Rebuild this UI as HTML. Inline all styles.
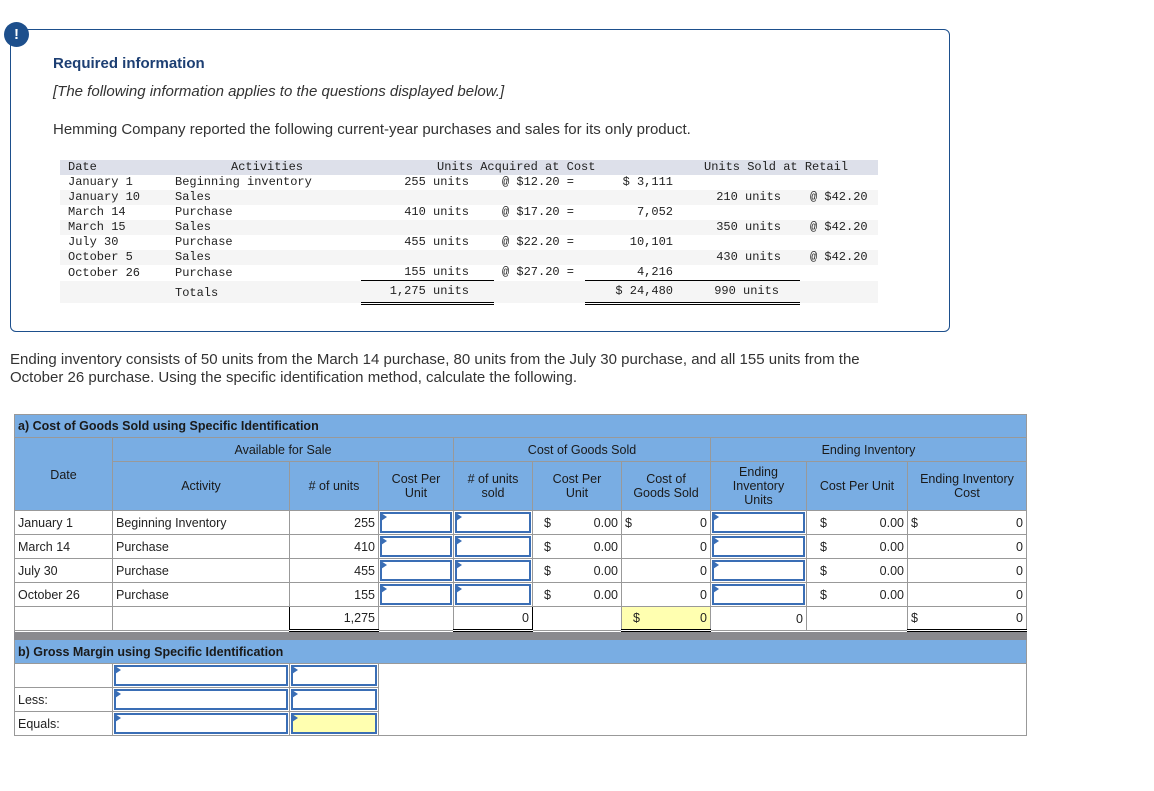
<!DOCTYPE html>
<html><head><meta charset="utf-8"><style>
*{margin:0;padding:0;box-sizing:border-box}
body{width:1154px;height:791px;background:#fff;font-family:"Liberation Sans",Arial,sans-serif;color:#222;position:relative;overflow:hidden}
.box{position:absolute;left:10px;top:29px;width:940px;height:303px;border:1px solid #1d4f8c;border-radius:6px}
.ic{position:absolute;left:4px;top:22px;width:25px;height:25px;border-radius:50%;background:#1d4f8c;color:#fff;font-weight:bold;font-size:15px;text-align:center;line-height:25px;z-index:2}
.t{position:absolute;white-space:nowrap}
.m{position:absolute;font-family:"Liberation Mono",monospace;font-size:12px;color:#222;white-space:nowrap;line-height:15px}
.r{text-align:right}
.row{position:absolute;left:60px;width:818px;height:15px}
table{position:absolute;left:14px;top:414px;border-collapse:collapse;table-layout:fixed;font-size:12.5px}
td{border:1px solid #999;height:24px;padding:0 3px;white-space:nowrap;position:relative}
.h{background:#79ade3;color:#1a1a1a;text-align:center;line-height:14px}
.in{position:absolute;left:1px;top:1px;right:1px;bottom:1px;border:2px solid #3a6eb5;background:#fff}
.in:before{content:"";position:absolute;left:-1px;top:-1px;border-left:6px solid #3a6eb5;border-bottom:4px solid transparent;border-top:4px solid transparent}
.y{background:#ffffb0}
.num{text-align:right}
.dl{float:left}
</style></head><body>
<div class="ic">!</div>
<div class="box"></div>
<div class="t" style="left:53px;top:55px;font-size:15px;font-weight:bold;color:#1d3f73">Required information</div>
<div class="t" style="left:53px;top:83px;font-size:15px;font-style:italic;color:#333">[The following information applies to the questions displayed below.]</div>
<div class="t" style="left:53px;top:121px;font-size:15px;color:#333">Hemming Company reported the following current-year purchases and sales for its only product.</div>

<div class="row" style="top:160px;background:#dde0ea"></div>
<div class="row" style="top:190px;background:#f5f5f5"></div>
<div class="row" style="top:220px;background:#f5f5f5"></div>
<div class="row" style="top:250px;background:#f5f5f5"></div>
<div class="row" style="top:281px;height:22px;background:#f5f5f5"></div>
<div class="m" style="left:68px;top:160px">Date</div>
<div class="m" style="left:231px;top:160px">Activities</div>
<div class="m" style="left:437px;top:160px">Units Acquired at Cost</div>
<div class="m" style="left:704px;top:160px">Units Sold at Retail</div>
<div class="m" style="left:68px;top:175px">January 1<br>January 10<br>March 14<br>March 15<br>July 30<br>October 5</div>
<div class="m" style="left:68px;top:266px">October 26</div>
<div class="m" style="left:175px;top:175px">Beginning inventory<br>Sales<br>Purchase<br>Sales<br>Purchase<br>Sales</div>
<div class="m" style="left:175px;top:266px">Purchase</div>
<div class="m" style="left:175px;top:286px">Totals</div>
<div class="m r" style="left:380px;width:89px;top:175px">255 units</div>
<div class="m r" style="left:380px;width:89px;top:205px">410 units</div>
<div class="m r" style="left:380px;width:89px;top:235px">455 units</div>
<div class="m r" style="left:380px;width:89px;top:265px">155 units</div>
<div class="m r" style="left:380px;width:89px;top:284px">1,275 units</div>
<div style="position:absolute;left:361px;top:280px;width:133px;border-top:1px solid #000"></div>
<div style="position:absolute;left:361px;top:302px;width:133px;border-top:3px double #000"></div>
<div class="m" style="left:502px;top:175px">@ $12.20  =</div>
<div class="m" style="left:502px;top:205px">@ $17.20  =</div>
<div class="m" style="left:502px;top:235px">@ $22.20  =</div>
<div class="m" style="left:502px;top:265px">@ $27.20  =</div>
<div class="m r" style="left:590px;width:83px;top:175px">$ 3,111</div>
<div class="m r" style="left:590px;width:83px;top:205px">7,052</div>
<div class="m r" style="left:590px;width:83px;top:235px">10,101</div>
<div class="m r" style="left:590px;width:83px;top:265px">4,216</div>
<div class="m r" style="left:590px;width:83px;top:284px">$ 24,480</div>
<div style="position:absolute;left:585px;top:280px;width:215px;border-top:1px solid #000"></div>
<div style="position:absolute;left:585px;top:302px;width:215px;border-top:3px double #000"></div>
<div class="m r" style="left:700px;width:81px;top:190px">210 units</div>
<div class="m r" style="left:700px;width:81px;top:220px">350 units</div>
<div class="m r" style="left:700px;width:81px;top:250px">430 units</div>
<div class="m r" style="left:700px;width:79px;top:284px">990 units</div>
<div class="m" style="left:810px;top:190px">@ $42.20</div>
<div class="m" style="left:810px;top:220px">@ $42.20</div>
<div class="m" style="left:810px;top:250px">@ $42.20</div>

<div class="t" style="left:10px;top:351px;font-size:15px;line-height:18px;color:#333;white-space:normal;width:892px">Ending inventory consists of 50 units from the March 14 purchase, 80 units from the July 30 purchase, and all 155 units from the October 26 purchase. Using the specific identification method, calculate the following.</div>

<table>
<colgroup><col style="width:98px"><col style="width:177px"><col style="width:89px"><col style="width:75px"><col style="width:79px"><col style="width:89px"><col style="width:89px"><col style="width:96px"><col style="width:101px"><col style="width:119px"></colgroup>
<tr><td colspan="10" class="h" style="text-align:left;font-weight:bold;height:23px">a) Cost of Goods Sold using Specific Identification</td></tr>
<tr><td rowspan="2" class="h" style="vertical-align:top;padding-top:30px">Date</td><td colspan="3" class="h" style="height:23px">Available for Sale</td><td colspan="3" class="h" style="border-left:1px solid #000">Cost of Goods Sold</td><td colspan="3" class="h" style="border-left:1px solid #000">Ending Inventory</td></tr>
<tr style="height:49px"><td class="h">Activity</td><td class="h"># of units</td><td class="h">Cost Per<br>Unit</td><td class="h" style="border-left:1px solid #000"># of units<br>sold</td><td class="h">Cost Per<br>Unit</td><td class="h">Cost of<br>Goods Sold</td><td class="h" style="border-left:1px solid #000">Ending<br>Inventory<br>Units</td><td class="h">Cost Per Unit</td><td class="h">Ending Inventory<br>Cost</td></tr>
<tr><td>January 1</td><td>Beginning Inventory</td><td class="num">255</td><td><div class="in"></div></td><td><div class="in"></div></td><td class="num"><span class="dl" style="padding-left:8px">$</span>0.00</td><td class="num"><span class="dl">$</span>0</td><td><div class="in"></div></td><td class="num"><span class="dl" style="padding-left:10px">$</span>0.00</td><td class="num"><span class="dl">$</span>0</td></tr>
<tr><td>March 14</td><td>Purchase</td><td class="num">410</td><td><div class="in"></div></td><td><div class="in"></div></td><td class="num"><span class="dl" style="padding-left:8px">$</span>0.00</td><td class="num">0</td><td><div class="in"></div></td><td class="num"><span class="dl" style="padding-left:10px">$</span>0.00</td><td class="num">0</td></tr>
<tr><td>July 30</td><td>Purchase</td><td class="num">455</td><td><div class="in"></div></td><td><div class="in"></div></td><td class="num"><span class="dl" style="padding-left:8px">$</span>0.00</td><td class="num">0</td><td><div class="in"></div></td><td class="num"><span class="dl" style="padding-left:10px">$</span>0.00</td><td class="num">0</td></tr>
<tr><td>October 26</td><td>Purchase</td><td class="num">155</td><td><div class="in"></div></td><td><div class="in"></div></td><td class="num"><span class="dl" style="padding-left:8px">$</span>0.00</td><td class="num">0</td><td><div class="in"></div></td><td class="num"><span class="dl" style="padding-left:10px">$</span>0.00</td><td class="num">0</td></tr>
<tr><td></td><td style="border-right:1px solid #000"></td><td class="num" style="border-top:1px solid #000;border-bottom:3px double #000">1,275</td><td></td><td class="num" style="border:1px solid #000;border-bottom:3px double #000">0</td><td></td><td class="num y" style="border-bottom:3px double #000"><span class="dl" style="padding-left:8px">$</span>0</td><td class="num" style="border-left:1px solid #000">0</td><td></td><td class="num" style="border-top:1px solid #000;border-bottom:3px double #000"><span class="dl">$</span>0</td></tr>
<tr><td colspan="10" style="height:9px;background:#8a8a8e;border-color:#8a8a8e"></td></tr>
<tr><td colspan="10" class="h" style="text-align:left;font-weight:bold">b) Gross Margin using Specific Identification</td></tr>
<tr><td></td><td><div class="in"></div></td><td><div class="in"></div></td><td colspan="7" style="border:none;border-right:1px solid #999"></td></tr>
<tr><td>Less:</td><td><div class="in"></div></td><td><div class="in"></div></td><td colspan="7" style="border:none;border-right:1px solid #999"></td></tr>
<tr><td>Equals:</td><td><div class="in"></div></td><td><div class="in y"></div></td><td colspan="7" style="border:none;border-right:1px solid #999;border-bottom:1px solid #999"></td></tr>
</table>
</body></html>
